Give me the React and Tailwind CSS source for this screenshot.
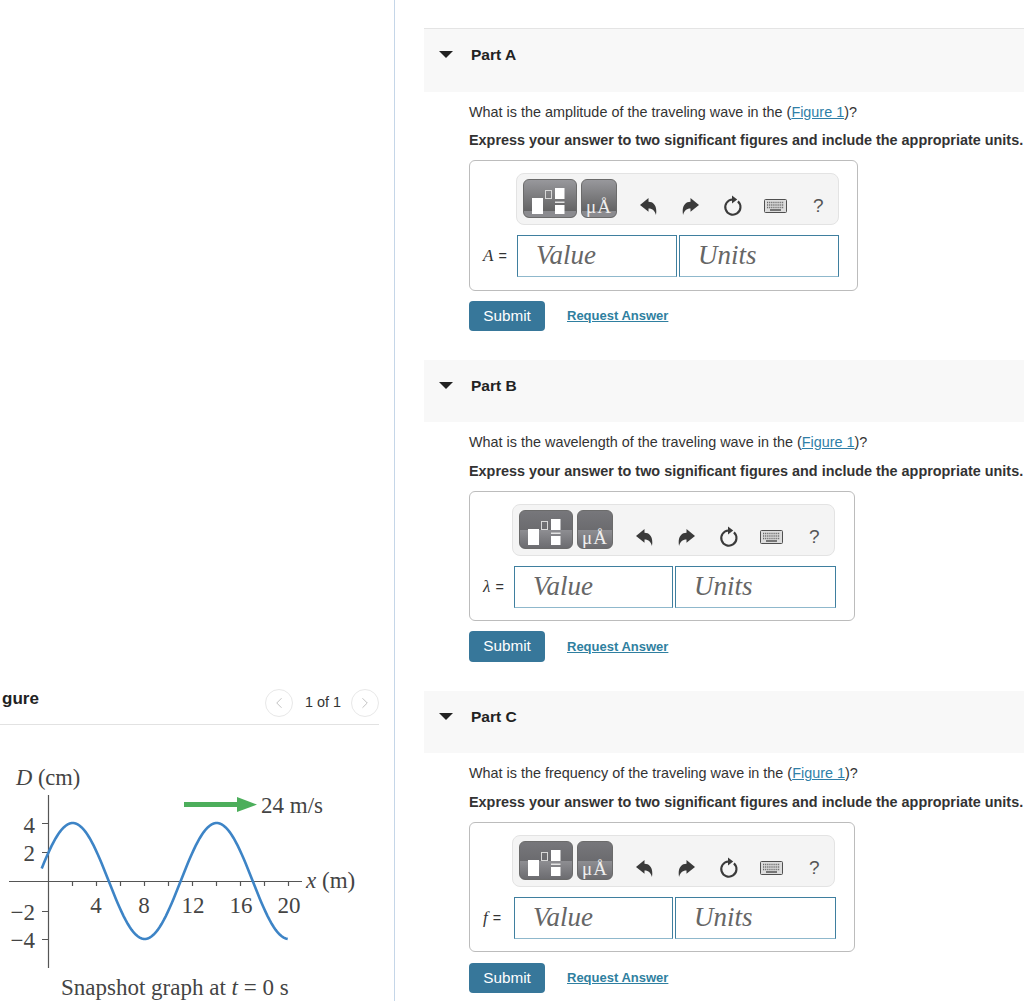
import { ChevronLeft, ChevronRight } from "lucide-react";

const sans = { fontFamily: '"Liberation Sans", Arial, sans-serif' };

// tall: the lighter band starts halfway down (parts B and C), otherwise it is a thin strip
const Band = ({ tall }) => (
  <div className={`absolute inset-x-0 bottom-0 ${tall ? "h-[18px] bg-linear-to-b from-[#8e8e92] to-[#6c6c70]" : "h-[6px] bg-[#8b8b8f]"}`} />
);

const TemplateButton = ({ tall }) => (
  <div className={`relative h-[39px] w-[54px] overflow-hidden rounded-md border border-[#6b6b6b] bg-linear-to-b ${tall ? "from-[#77777b] to-[#606063]" : "from-[#98989c] to-[#5a5a5a]"}`}>
    <Band tall={tall} />
    <svg className="absolute -left-px -top-px" width="54" height="39" viewBox="0 0 54 39">
      <rect x="9" y="19" width="11" height="16" fill="#fff" />
      <rect x="22.5" y="11.5" width="6" height="8" fill="none" stroke="#d8d8d8" />
      <rect x="32" y="9" width="9.5" height="11" fill="#fff" />
      <rect x="32" y="22.5" width="9.5" height="1.5" fill="#e4e4e4" />
      <rect x="32" y="26" width="9.5" height="9" fill="#fff" />
    </svg>
  </div>
);

const UnitButton = ({ tall }) => (
  <div className={`relative flex h-[39px] w-[36px] items-end justify-center overflow-hidden rounded-md border border-[#6b6b6b] bg-linear-to-b ${tall ? "from-[#77777b] to-[#606063]" : "from-[#98989c] to-[#5a5a5a]"}`}>
    <Band tall={tall} />
    <span className="relative text-[19px] leading-[20px] tracking-[1px] text-[#eee]" style={{ fontFamily: '"Liberation Serif", serif' }}>μÅ</span>
  </div>
);

const UndoIcon = ({ flip }) => (
  <svg width="17" height="17" viewBox="0 0 16 16" className={flip ? "-scale-x-100" : ""}>
    <path d="M0 6.5 L8 0 V3.6 C13 3.6 16.5 8 15 16 C14 12 12 9.8 8 9.8 V13 Z" fill="#3a3a3a" />
  </svg>
);

const ResetIcon = () => (
  <svg width="20" height="22" viewBox="0 0 20 22">
    <path d="M14.9 6.4 A7.6 7.6 0 1 1 9.5 4.5" fill="none" stroke="#3a3a3a" strokeWidth="2.1" />
    <path d="M9 0.4 L14.2 4.5 L9 8.6 Z" fill="#3a3a3a" />
  </svg>
);

const KeyboardIcon = () => (
  <svg width="23" height="14" viewBox="0 0 23 14">
    <rect x="0.5" y="0.5" width="22" height="13" rx="1" fill="#dcdcdc" stroke="#4f4f4f" />
    <path d="M3 3.5 H20 M3 6 H20 M3 8.5 H20" stroke="#6a6a6a" strokeWidth="1.3" strokeDasharray="1.2 0.9" />
    <path d="M6 11 H17" stroke="#555" strokeWidth="1.5" />
  </svg>
);

const Toolbar = ({ className, tall }) => (
  <div className={`flex h-[52px] w-[323px] rounded-lg border border-[#e3e3e3] bg-[#f4f4f4] pl-[6px] pt-[5px] ${className}`}>
    <div className="flex h-[39px] gap-[4px]">
      <TemplateButton tall={tall} />
      <UnitButton tall={tall} />
    </div>
    <div className="ml-[10px] mt-[15px] flex h-[24px]">
      <div className="flex w-[42.5px] items-center justify-center"><UndoIcon /></div>
      <div className="flex w-[42.5px] items-center justify-center"><UndoIcon flip /></div>
      <div className="flex w-[42.5px] items-center justify-center"><ResetIcon /></div>
      <div className="flex w-[42.5px] items-center justify-center"><KeyboardIcon /></div>
      <div className="flex w-[42.5px] items-center justify-center text-[19px] text-[#555]">?</div>
    </div>
  </div>
);

const AnswerInput = ({ placeholder, width }) => (
  <div className={`flex h-[42px] items-center border border-[#3f7f9f] border-b-[#8fb8cc] pb-[2px] pl-[18px] text-[27px] italic text-[#666] ${width}`} style={{ fontFamily: '"Liberation Serif", serif' }}>
    {placeholder}
  </div>
);

const Part = ({ name, what, symbol, head, gapQ, boxW, boxH, toolbarMl, inputW, unitsW, labelW, submitMt, submitH, bottom, top, tall }) => (
  <section className={bottom}>
    <div className={`flex items-center bg-[#f8f8f8] pl-[15px] ${head} ${top ? "border-t border-[#e4e4e4]" : ""}`}>
      <svg width="14" height="7" viewBox="0 0 14 7">
        <path d="M0 0 H14 L7 7 Z" fill="#222" />
      </svg>
      <span className="ml-[18px] text-[15.5px] font-bold text-[#222]">{name}</span>
    </div>
    <div className="pl-[45px]">
      <p className="mt-[10px] h-[20px] whitespace-nowrap text-[14.4px] leading-5 text-[#333]">
        What is the {what} of the traveling wave in the (<a className="text-[#2f7fa8] underline">Figure 1</a>)?
      </p>
      <p className={`h-[20px] whitespace-nowrap text-[14.4px] font-bold leading-5 text-[#333] ${gapQ}`}>
        Express your answer to two significant figures and include the appropriate units.
      </p>
      <div className={`mt-[10px] rounded-md border border-[#bcbcbc] pl-[12px] pt-[12px] ${boxW} ${boxH}`}>
        <Toolbar className={toolbarMl} tall={tall} />
        <div className="mt-[10px] flex items-center">
          <div className={`pl-[1px] text-[14.4px] text-[#333] ${labelW}`}>
            <i style={{ fontFamily: '"Liberation Serif", serif' }} className="text-[17px]">{symbol}</i>
            <span className="ml-[5px]">=</span>
          </div>
          <AnswerInput placeholder="Value" width={inputW} />
          <div className="w-[2px]" />
          <AnswerInput placeholder="Units" width={unitsW} />
        </div>
      </div>
      <div className={`flex items-center ${submitMt}`}>
        <button className={`w-[76px] rounded-sm bg-[#37779a] text-[15.3px] text-white ${submitH}`}>Submit</button>
        <a className="ml-[22px] text-[13px] font-bold text-[#2f7fa0] underline">Request Answer</a>
      </div>
    </div>
  </section>
);

const wave = Array.from({ length: 124 }, (_, i) => {
  const x = 41.7 + i * 2;
  return `${x},${(881 - 58 * Math.cos((2 * Math.PI * (x - 72.7)) / 144)).toFixed(2)}`;
}).join(" ");

const SnapshotGraph = () => (
  <svg width="394" height="276" viewBox="0 725 394 276" className="block" fontFamily="Liberation Serif, serif" fill="#444">
    <text x="16" y="785" fontSize="22.5"><tspan fontStyle="italic">D</tspan> (cm)</text>
    <path d="M48.5 795 V968 M9 881.5 H302 M42 823.5 H48 M42 852.5 H48 M42 911.5 H48 M42 939.5 H48" stroke="#555" strokeWidth="1.2" fill="none" />
    {[72, 96, 120, 144, 168, 192, 216, 240, 264, 288].map((x) => (
      <path key={x} d={`M${x + 0.5} 881 V886`} stroke="#555" strokeWidth="1.2" />
    ))}
    <text x="35" y="833" fontSize="23" textAnchor="end">4</text>
    <text x="35" y="861" fontSize="23" textAnchor="end">2</text>
    <text x="35" y="920" fontSize="23" textAnchor="end">−2</text>
    <text x="35" y="948" fontSize="23" textAnchor="end">−4</text>
    <text x="96" y="913" fontSize="23" textAnchor="middle">4</text>
    <text x="144" y="913" fontSize="23" textAnchor="middle">8</text>
    <text x="193" y="913" fontSize="23" textAnchor="middle">12</text>
    <text x="241" y="913" fontSize="23" textAnchor="middle">16</text>
    <text x="289" y="913" fontSize="23" textAnchor="middle">20</text>
    <polyline points={wave} fill="none" stroke="#3d84c6" strokeWidth="2.6" />
    <path d="M184 804.5 H238" stroke="#4cae5b" strokeWidth="5" />
    <path d="M237 797 L257 804.5 L237 812 Z" fill="#4cae5b" />
    <text x="261" y="813" fontSize="23">24 m/s</text>
    <text x="306" y="888" fontSize="23"><tspan fontStyle="italic">x</tspan> (m)</text>
    <text x="61" y="995" fontSize="23">Snapshot graph at <tspan fontStyle="italic">t</tspan> = 0 s</text>
  </svg>
);

export default function App() {
  return (
    <div className="flex h-[1001px] w-[1024px] overflow-hidden bg-white" style={sans}>
      <aside className="flex w-[395px] shrink-0 flex-col justify-end border-r border-[#c5d6e8]">
        <div className="mr-[15px] flex h-[44px] items-center justify-between border-b border-[#e2e2e2] pl-[2px]">
          <span className="-mt-[8px] text-[17px] font-bold text-[#222]">gure</span>
          <div className="flex items-center">
            <span className="flex h-[28px] w-[28px] items-center justify-center rounded-full border border-[#e8e8e8] text-[#bbb]"><ChevronLeft size={18} strokeWidth={1.2} /></span>
            <span className="ml-[12px] mr-[10px] text-[14.4px] text-[#333]">1 of 1</span>
            <span className="flex h-[28px] w-[28px] items-center justify-center rounded-full border border-[#e8e8e8] text-[#bbb]"><ChevronRight size={18} strokeWidth={1.2} /></span>
          </div>
        </div>
        <SnapshotGraph />
      </aside>
      <main className="min-w-0 flex-1 pl-[29px] pt-[28px]">
        <Part top name="Part A" what="amplitude" symbol="A" head="h-[64px] pb-[12px]" gapQ="mt-[8px]" boxW="w-[389px]" boxH="h-[131px]" toolbarMl="ml-[34px]" inputW="w-[160px]" unitsW="w-[160px]" labelW="w-[35px]" submitMt="mt-[10px]" submitH="h-[30px]" bottom="pb-[29px]" />
        <Part tall name="Part B" what="wavelength" symbol="λ" head="h-[62px] pb-[11px]" gapQ="mt-[9px]" boxW="w-[386px]" boxH="h-[130px]" toolbarMl="ml-[30px]" inputW="w-[159px]" unitsW="w-[161px]" labelW="w-[32px]" submitMt="mt-[10px]" submitH="h-[31px]" bottom="pb-[29px]" />
        <Part tall name="Part C" what="frequency" symbol="f" head="h-[62px] pb-[11px]" gapQ="mt-[9px]" boxW="w-[386px]" boxH="h-[130px]" toolbarMl="ml-[30px]" inputW="w-[159px]" unitsW="w-[161px]" labelW="w-[32px]" submitMt="mt-[11px]" submitH="h-[30px]" bottom="pb-0" />
      </main>
    </div>
  );
}
